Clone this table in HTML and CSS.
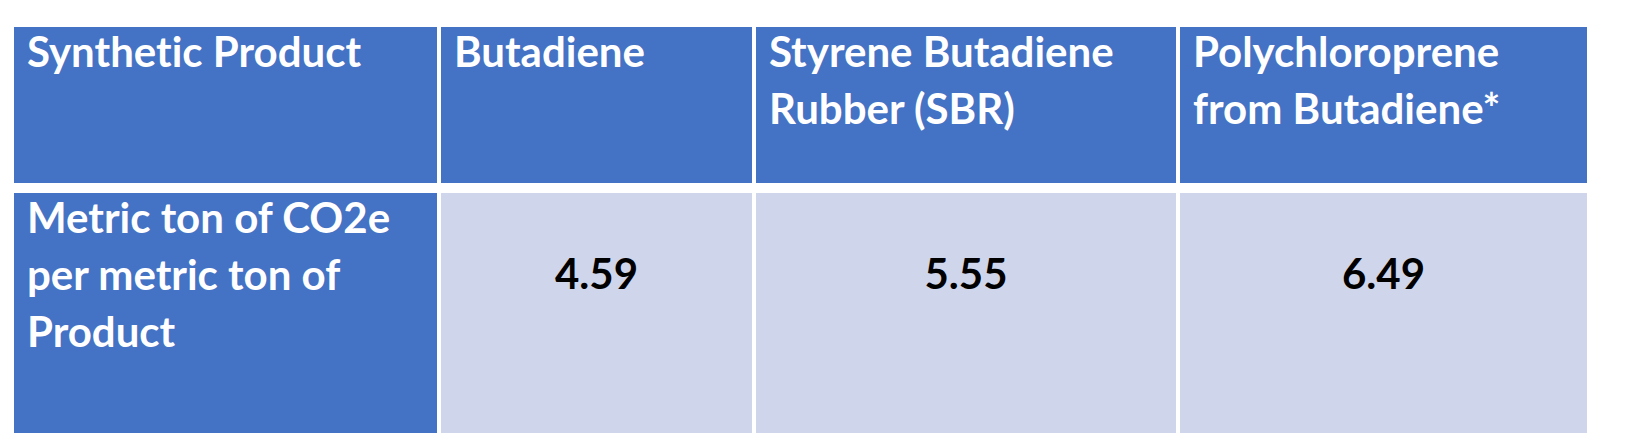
FILE: index.html
```html
<!DOCTYPE html>
<html lang="en">
<head>
<meta charset="utf-8">
<title>Synthetic Product emissions</title>
<link rel="stylesheet" href="styles.css">
</head>
<body>
<div class="table">
  <div class="cell head"><p>Synthetic Product</p></div>
  <div class="cell head"><p>Butadiene</p></div>
  <div class="cell head"><p>Styrene Butadiene<br>Rubber (SBR)</p></div>
  <div class="cell head"><p>Polychloroprene<br>from Butadiene*</p></div>
  <div class="cell label"><p>Metric ton of CO2e<br>per metric ton of<br>Product</p></div>
  <div class="cell value"><p>4.59</p></div>
  <div class="cell value"><p>5.55</p></div>
  <div class="cell value"><p>6.49</p></div>
</div>
</body>
</html>
```
FILE: styles.css
```css
html, body {
  background: #ffffff;
}
body {
  margin: 0;
  padding: 27px 0 0 14px;
  font-family: Lato, "Open Sans", "Liberation Sans", sans-serif;
  font-weight: 700;
  font-size: 42px;
  line-height: 57px;
  font-variant-ligatures: none;
}
.table {
  display: grid;
  grid-template-columns: 423px 311px 420px 407px;
  grid-template-rows: 156px 240px;
  column-gap: 4px;
  row-gap: 10px;
  width: max-content;
}
.cell {
  padding: 0 13px;
}
.cell p {
  margin: 0;
  white-space: nowrap;
}
.head {
  background: #4472c4;
  color: #ffffff;
}
.head p {
  margin-top: -4px;
}
.label {
  background: #4472c4;
  color: #ffffff;
}
.label p {
  margin-top: -4px;
}
.value {
  background: #cfd5ea;
  color: #000000;
  text-align: center;
}
.value p {
  margin-top: 52px;
}
```
